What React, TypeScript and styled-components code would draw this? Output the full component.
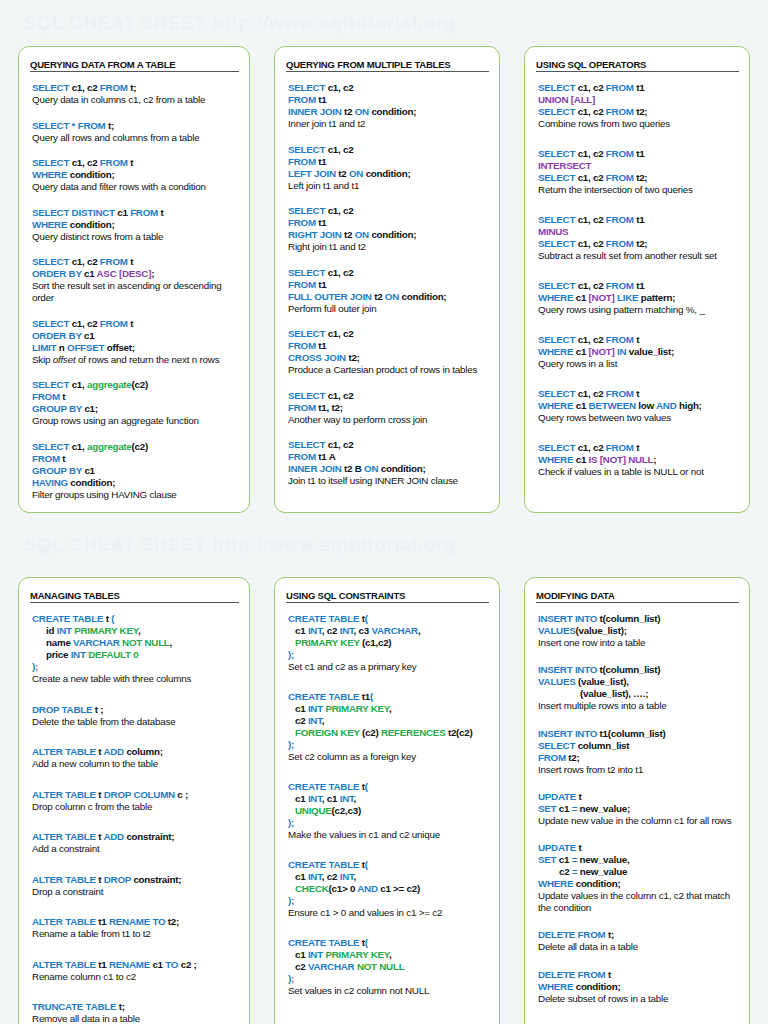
import React from "react";
import styled, { createGlobalStyle } from "styled-components";

const Global = createGlobalStyle`
  html, body { margin: 0; padding: 0; background: #f1f5f6; }
  body { font-family: "Liberation Sans", Arial, sans-serif; overflow: hidden; height: 1024px; }
`;

const Page = styled.div`
  width: 768px;
  padding: 0 0 0 18px;
  box-sizing: border-box;
`;

const Faint = styled.div<{ $h: number }>`
  height: ${(p) => p.$h}px;
  display: flex;
  align-items: center;
  padding-left: 6px;
  color: #ebf0f2;
  font-size: 18px;
  font-weight: bold;
  letter-spacing: 1px;
`;

const Row = styled.div`
  display: grid;
  grid-template-columns: 232px 226px 226px;
  column-gap: 24px;
`;

const Card = styled.div<{ $h?: number }>`
  background: #ffffff;
  border: 1.5px solid #9ccb6f;
  border-radius: 11px;
  box-sizing: border-box;
  padding: 12px 10px 10px 11px;
  height: ${(p) => (p.$h ? `${p.$h}px` : "auto")};
  ${(p) => (p.$h ? "" : "min-height: 520px;")}
`;

const Title = styled.div`
  font-size: 9.5px;
  font-weight: bold;
  color: #111;
  border-bottom: 1px solid #555;
  padding-bottom: 1px;
  margin-bottom: 10px;
  letter-spacing: -0.2px;
`;

const Block = styled.div<{ $gap: number }>`
  margin-bottom: ${(p) => p.$gap}px;
  padding-left: 2px;
`;

const Code = styled.div<{ $indent: number }>`
  font-size: 9.8px;
  line-height: 12px;
  font-weight: bold;
  color: #111;
  padding-left: ${(p) => p.$indent * 7}px;
  letter-spacing: -0.25px;
  white-space: nowrap;
`;

const Desc = styled.div`
  font-size: 9.8px;
  line-height: 12px;
  color: #111;
  letter-spacing: -0.2px;
`;

const Tok = styled.span<{ $c: string }>`
  color: ${(p) => p.$c};
`;

const colors: Record<string, string> = {
  "«": "#1f7cc4",
  "‹": "#26a84a",
  "⟦": "#8a3ca8",
};
const closers: Record<string, string> = { "«": "»", "‹": "›", "⟦": "⟧" };

function renderLine(s: string) {
  const out: React.ReactNode[] = [];
  let i = 0;
  let buf = "";
  let k = 0;
  while (i < s.length) {
    const ch = s[i];
    if (colors[ch]) {
      if (buf) out.push(<span key={k++}>{buf}</span>);
      buf = "";
      const end = s.indexOf(closers[ch], i + 1);
      out.push(
        <Tok key={k++} $c={colors[ch]}>
          {s.slice(i + 1, end)}
        </Tok>
      );
      i = end + 1;
    } else {
      buf += ch;
      i++;
    }
  }
  if (buf) out.push(<span key={k++}>{buf}</span>);
  return out;
}

type B = { code: string[]; desc: React.ReactNode };

const CodeLine = ({ line }: { line: string }) => {
  let n = 0;
  while (line[n] === "~") n++;
  return <Code $indent={n}>{renderLine(line.slice(n))}</Code>;
};

const Section = ({ title, blocks, gap, h }: { title: string; blocks: B[]; gap: number; h?: number }) => (
  <Card $h={h}>
    <Title>{title}</Title>
    {blocks.map((b, i) => (
      <Block key={i} $gap={gap}>
        {b.code.map((l, j) => (
          <CodeLine key={j} line={l} />
        ))}
        <Desc>{b.desc}</Desc>
      </Block>
    ))}
  </Card>
);

const q1: B[] = [
  { code: ["«SELECT» c1, c2 «FROM» t;"], desc: "Query data in columns c1, c2 from a table" },
  { code: ["«SELECT * FROM» t;"], desc: "Query all rows and columns from a table" },
  { code: ["«SELECT» c1, c2 «FROM» t", "«WHERE» condition;"], desc: "Query data and filter rows with a condition" },
  { code: ["«SELECT DISTINCT» c1 «FROM» t", "«WHERE» condition;"], desc: "Query distinct rows from a table" },
  { code: ["«SELECT» c1, c2 «FROM» t", "«ORDER BY» c1 ⟦ASC [DESC]⟧;"], desc: "Sort the result set in ascending or descending order" },
  {
    code: ["«SELECT» c1, c2 «FROM» t", "«ORDER BY» c1", "«LIMIT» n «OFFSET» offset;"],
    desc: (
      <>
        Skip <i>offset</i> of rows and return the next n rows
      </>
    ),
  },
  { code: ["«SELECT» c1, ‹aggregate›(c2)", "«FROM» t", "«GROUP BY» c1;"], desc: "Group rows using an aggregate function" },
  { code: ["«SELECT» c1, ‹aggregate›(c2)", "«FROM» t", "«GROUP BY» c1", "«HAVING» condition;"], desc: "Filter groups using HAVING clause" },
];

const join = (j: string, d: string): B => ({ code: ["«SELECT» c1, c2", "«FROM» t1", `«${j}» t2 «ON» condition;`], desc: d });
const q2: B[] = [
  join("INNER JOIN", "Inner join t1 and t2"),
  join("LEFT JOIN", "Left join t1 and t1"),
  join("RIGHT JOIN", "Right join t1 and t2"),
  join("FULL OUTER JOIN", "Perform full outer join"),
  { code: ["«SELECT» c1, c2", "«FROM» t1", "«CROSS JOIN» t2;"], desc: "Produce a Cartesian product of rows in tables" },
  { code: ["«SELECT» c1, c2", "«FROM» t1, t2;"], desc: "Another way to perform cross join" },
  { code: ["«SELECT» c1, c2", "«FROM» t1 A", "«INNER JOIN» t2 B «ON» condition;"], desc: "Join t1 to itself using INNER JOIN clause" },
];

const op = (o: string, d: string): B => ({ code: ["«SELECT» c1, c2 «FROM» t1", `⟦${o}⟧`, "«SELECT» c1, c2 «FROM» t2;"], desc: d });
const q3: B[] = [
  op("UNION [ALL]", "Combine rows from two queries"),
  op("INTERSECT", "Return the intersection of two queries"),
  op("MINUS", "Subtract a result set from another result set"),
  { code: ["«SELECT» c1, c2 «FROM» t1", "«WHERE» c1 ⟦[NOT]⟧ «LIKE» pattern;"], desc: "Query rows using pattern matching %, _" },
  { code: ["«SELECT» c1, c2 «FROM» t", "«WHERE» c1 ⟦[NOT]⟧ «IN» value_list;"], desc: "Query rows in a list" },
  { code: ["«SELECT» c1, c2 «FROM» t", "«WHERE»  c1 «BETWEEN» low «AND» high;"], desc: "Query rows between two values" },
  { code: ["«SELECT» c1, c2 «FROM» t", "«WHERE»  c1 ⟦IS [NOT] NULL⟧;"], desc: "Check if values in a table is NULL or not" },
];

const m1: B[] = [
  {
    code: ["«CREATE TABLE» t «(»", "~~id «INT» ‹PRIMARY KEY›,", "~~name «VARCHAR» ‹NOT NULL›,", "~~price «INT» ‹DEFAULT 0›", "«);»"],
    desc: "Create a new table with three columns",
  },
  { code: ["«DROP TABLE» t ;"], desc: "Delete the table from the database" },
  { code: ["«ALTER TABLE» t «ADD» column;"], desc: "Add a new column to the table" },
  { code: ["«ALTER TABLE» t «DROP COLUMN» c ;"], desc: "Drop column c from the table" },
  { code: ["«ALTER TABLE» t «ADD» constraint;"], desc: "Add a constraint" },
  { code: ["«ALTER TABLE» t «DROP» constraint;"], desc: "Drop a constraint" },
  { code: ["«ALTER TABLE» t1 «RENAME TO» t2;"], desc: "Rename a table from t1 to t2" },
  { code: ["«ALTER TABLE» t1 «RENAME» c1 «TO» c2 ;"], desc: "Rename column c1 to c2" },
  { code: ["«TRUNCATE TABLE» t;"], desc: "Remove all data in a table" },
];

const m2: B[] = [
  { code: ["«CREATE TABLE» t«(»", "~c1 «INT», c2 «INT», c3 «VARCHAR»,", "~‹PRIMARY KEY› (c1,c2)", "«);»"], desc: "Set c1 and c2 as a primary key" },
  {
    code: ["«CREATE TABLE» t1«(»", "~c1 «INT» ‹PRIMARY KEY›,", "~c2 «INT»,", "~‹FOREIGN KEY› (c2) ‹REFERENCES› t2(c2)", "«);»"],
    desc: "Set c2 column as a foreign key",
  },
  { code: ["«CREATE TABLE» t«(»", "~c1 «INT», c1 «INT»,", "~‹UNIQUE›(c2,c3)", "«);»"], desc: "Make the values in c1 and c2 unique" },
  { code: ["«CREATE TABLE» t«(»", "~c1 «INT», c2 «INT»,", "~‹CHECK›(c1> 0 «AND» c1 >= c2)", "«);»"], desc: "Ensure c1 > 0 and values in c1 >= c2" },
  { code: ["«CREATE TABLE» t«(»", "~c1 «INT» ‹PRIMARY KEY›,", "~c2 «VARCHAR» ‹NOT NULL›", "«);»"], desc: "Set values in c2 column not NULL" },
];

const m3: B[] = [
  { code: ["«INSERT INTO» t(column_list)", "«VALUES»(value_list);"], desc: "Insert one row into a table" },
  { code: ["«INSERT INTO» t(column_list)", "«VALUES» (value_list),", "~~~~~~(value_list), ….;"], desc: "Insert multiple rows into a table" },
  { code: ["«INSERT INTO» t1(column_list)", "«SELECT» column_list", "«FROM» t2;"], desc: "Insert rows from t2 into t1" },
  { code: ["«UPDATE» t", "«SET» c1 «=» new_value;"], desc: "Update new value in the column c1 for all rows" },
  {
    code: ["«UPDATE» t", "«SET» c1 «=» new_value,", "~~~c2 «=» new_value", "«WHERE» condition;"],
    desc: "Update values in the column c1, c2 that match the condition",
  },
  { code: ["«DELETE FROM» t;"], desc: "Delete all data in a table" },
  { code: ["«DELETE FROM» t", "«WHERE» condition;"], desc: "Delete subset of rows in a table" },
];

export default function App() {
  return (
    <>
      <Global />
      <Page>
        <Faint $h={46}>SQL CHEAT SHEET http://www.sqltutorial.org</Faint>
        <Row>
          <Section title="QUERYING DATA FROM A TABLE" blocks={q1} gap={13.5} h={467} />
          <Section title="QUERYING FROM MULTIPLE TABLES" blocks={q2} gap={13.5} h={467} />
          <Section title="USING SQL OPERATORS" blocks={q3} gap={18} h={467} />
        </Row>
        <Faint $h={64}>SQL CHEAT SHEET http://www.sqltutorial.org</Faint>
        <Row>
          <Section title="MANAGING TABLES" blocks={m1} gap={18.5} />
          <Section title="USING SQL CONSTRAINTS" blocks={m2} gap={18} />
          <Section title="MODIFYING DATA" blocks={m3} gap={15.3} />
        </Row>
      </Page>
    </>
  );
}
